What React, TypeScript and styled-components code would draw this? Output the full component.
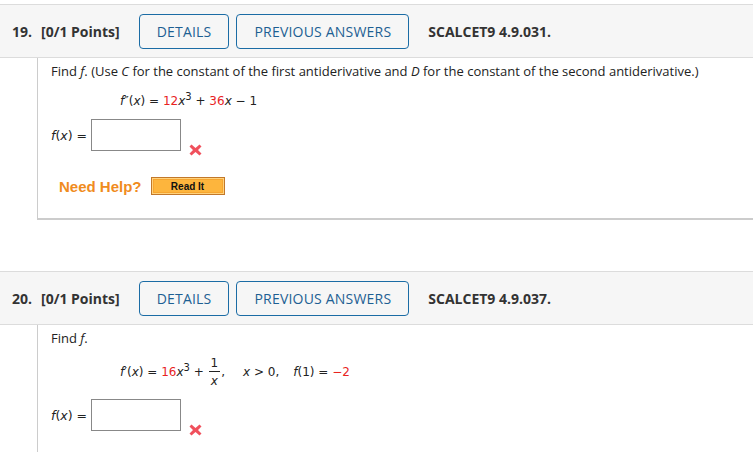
import React from "react";
import styled, { createGlobalStyle } from "styled-components";

const Global = createGlobalStyle`
  html, body { margin: 0; padding: 0; background: #fff; }
  body { font-family: "Open Sans", "Liberation Sans", sans-serif; color: #222; }
`;

const Page = styled.div`
  padding-top: 4px;
  width: 753px;
  overflow: hidden;
`;

const Question = styled.section<{ $gap?: number }>`
  margin-bottom: ${(p) => p.$gap ?? 0}px;
`;

const Header = styled.div`
  display: flex;
  align-items: center;
  height: 52px;
  padding-left: 12px;
  background: #f6f6f6;
  border-top: 1px solid #dcdcdc;
  border-bottom: 1px solid #dcdcdc;
  font-weight: 700;
  font-size: 14px;
  color: #333;
`;

const Num = styled.span`
  width: 29px;
`;

const Points = styled.span`
  margin-right: 19px;
`;

const HeadButton = styled.button`
  height: 35px;
  padding: 0 17px;
  margin-right: 7px;
  background: transparent;
  border: 1px solid #1b6ca5;
  border-radius: 4px;
  color: #1d5f93;
  font-family: "Open Sans", "Liberation Sans", sans-serif;
  font-size: 14px;
  font-weight: 500;
  letter-spacing: 0.2px;
`;

const Code = styled.span`
  margin-left: 12px;
`;

const Body = styled.div<{ $height?: number }>`
  margin-left: 37px;
  padding-left: 13px;
  border-left: 1px solid #cccccc;
  border-bottom: ${(p) => (p.$height ? "2px solid #cccccc" : "none")};
  ${(p) => (p.$height ? `height: ${p.$height}px;` : "height: 140px;")}
  display: flex;
  flex-direction: column;
  align-items: flex-start;
`;

const Prompt = styled.div<{ $top: number }>`
  margin-top: ${(p) => p.$top}px;
  font-size: 13px;
  line-height: 18px;
  color: #222;
  i { font-style: italic; }
`;

const Formula = styled.div<{ $top: number }>`
  margin-top: ${(p) => p.$top}px;
  margin-left: 69px;
  font-family: "DejaVu Sans", Verdana, sans-serif;
  font-size: 12px;
  line-height: 16px;
  color: #222;
  white-space: pre;
  i { font-style: italic; }
  sup { font-size: 10px; line-height: 0; vertical-align: 5px; }
`;

const Red = styled.span`
  color: #e8231f;
`;

const Frac = styled.span`
  display: inline-flex;
  flex-direction: column;
  align-items: center;
  vertical-align: middle;
  margin: 0 1px;
  line-height: 18px;
`;

const FracTop = styled.span`
  border-bottom: 1px solid #222;
  padding: 0 2px;
  line-height: 16px;
`;

const Gap = styled.span<{ $w: number }>`
  display: inline-block;
  width: ${(p) => p.$w}px;
`;

const AnswerRow = styled.div<{ $top: number }>`
  margin-top: ${(p) => p.$top}px;
  display: flex;
  align-items: center;
  font-family: "DejaVu Sans", Verdana, sans-serif;
  font-size: 12.5px;
  color: #222;
  i { font-style: italic; }
`;

const Label = styled.span`
  width: 40px;
  white-space: pre;
`;

const Input = styled.div`
  width: 88px;
  height: 30px;
  border: 1px solid #888;
  background: #fff;
`;

const Mark = styled.span`
  align-self: flex-end;
  margin-left: 8px;
  margin-bottom: -5px;
  display: inline-flex;
`;

const HelpRow = styled.div`
  margin-top: 26px;
  margin-left: 8px;
  display: flex;
  align-items: center;
  gap: 9px;
`;

const HelpText = styled.span`
  font-family: "Liberation Sans", Arial, sans-serif;
  font-weight: 700;
  font-size: 15px;
  color: #f08c1e;
`;

const ReadIt = styled.button`
  width: 74px;
  height: 18px;
  padding: 0;
  background: #fdb53d;
  border: 1px solid #c2782a;
  box-shadow: inset 0 0 0 1px #ffd27c, inset 0 0 0 2px #f7a52f;
  font-family: "Liberation Sans", Arial, sans-serif;
  font-weight: 700;
  font-size: 10px;
  color: #111;
`;

const Cross = () => (
  <svg width="13" height="12" viewBox="0 0 13 12">
    <path
      d="M0.5 2.5 L2.5 0.5 L6.5 4 L10.5 0.5 L12.5 2.5 L9 6 L12.5 9.5 L10.5 11.5 L6.5 8 L2.5 11.5 L0.5 9.5 L4 6 Z"
      fill="#f0505c"
    />
  </svg>
);

export default function App() {
  return (
    <Page>
      <Global />
      <Question $gap={51}>
        <Header>
          <Num>19.</Num>
          <Points>[0/1 Points]</Points>
          <HeadButton>DETAILS</HeadButton>
          <HeadButton>PREVIOUS ANSWERS</HeadButton>
          <Code>SCALCET9 4.9.031.</Code>
        </Header>
        <Body $height={160}>
          <Prompt $top={4}>
            Find <i>f</i>. (Use <i>C</i> for the constant of the first antiderivative and <i>D</i> for the constant of the second antiderivative.)
          </Prompt>
          <Formula $top={13}>
            <i>f</i>″(<i>x</i>) = <Red>12</Red><i>x</i><sup>3</sup> + <Red>36</Red><i>x</i> − 1
          </Formula>
          <AnswerRow $top={10}>
            <Label><i>f</i>(<i>x</i>) = </Label>
            <Input />
            <Mark><Cross /></Mark>
          </AnswerRow>
          <HelpRow>
            <HelpText>Need Help?</HelpText>
            <ReadIt>Read It</ReadIt>
          </HelpRow>
        </Body>
      </Question>
      <Question>
        <Header>
          <Num>20.</Num>
          <Points>[0/1 Points]</Points>
          <HeadButton>DETAILS</HeadButton>
          <HeadButton>PREVIOUS ANSWERS</HeadButton>
          <Code>SCALCET9 4.9.037.</Code>
        </Header>
        <Body>
          <Prompt $top={4}>
            Find <i>f</i>.
          </Prompt>
          <Formula $top={8}>
            <i>f</i>′(<i>x</i>) = <Red>16</Red><i>x</i><sup>3</sup> + <Frac><FracTop>1</FracTop><i>x</i></Frac>,<Gap $w={18} /><i>x</i> &gt; 0,<Gap $w={14} /><i>f</i>(1) = <Red>−2</Red>
          </Formula>
          <AnswerRow $top={9}>
            <Label><i>f</i>(<i>x</i>) = </Label>
            <Input />
            <Mark><Cross /></Mark>
          </AnswerRow>
        </Body>
      </Question>
    </Page>
  );
}
